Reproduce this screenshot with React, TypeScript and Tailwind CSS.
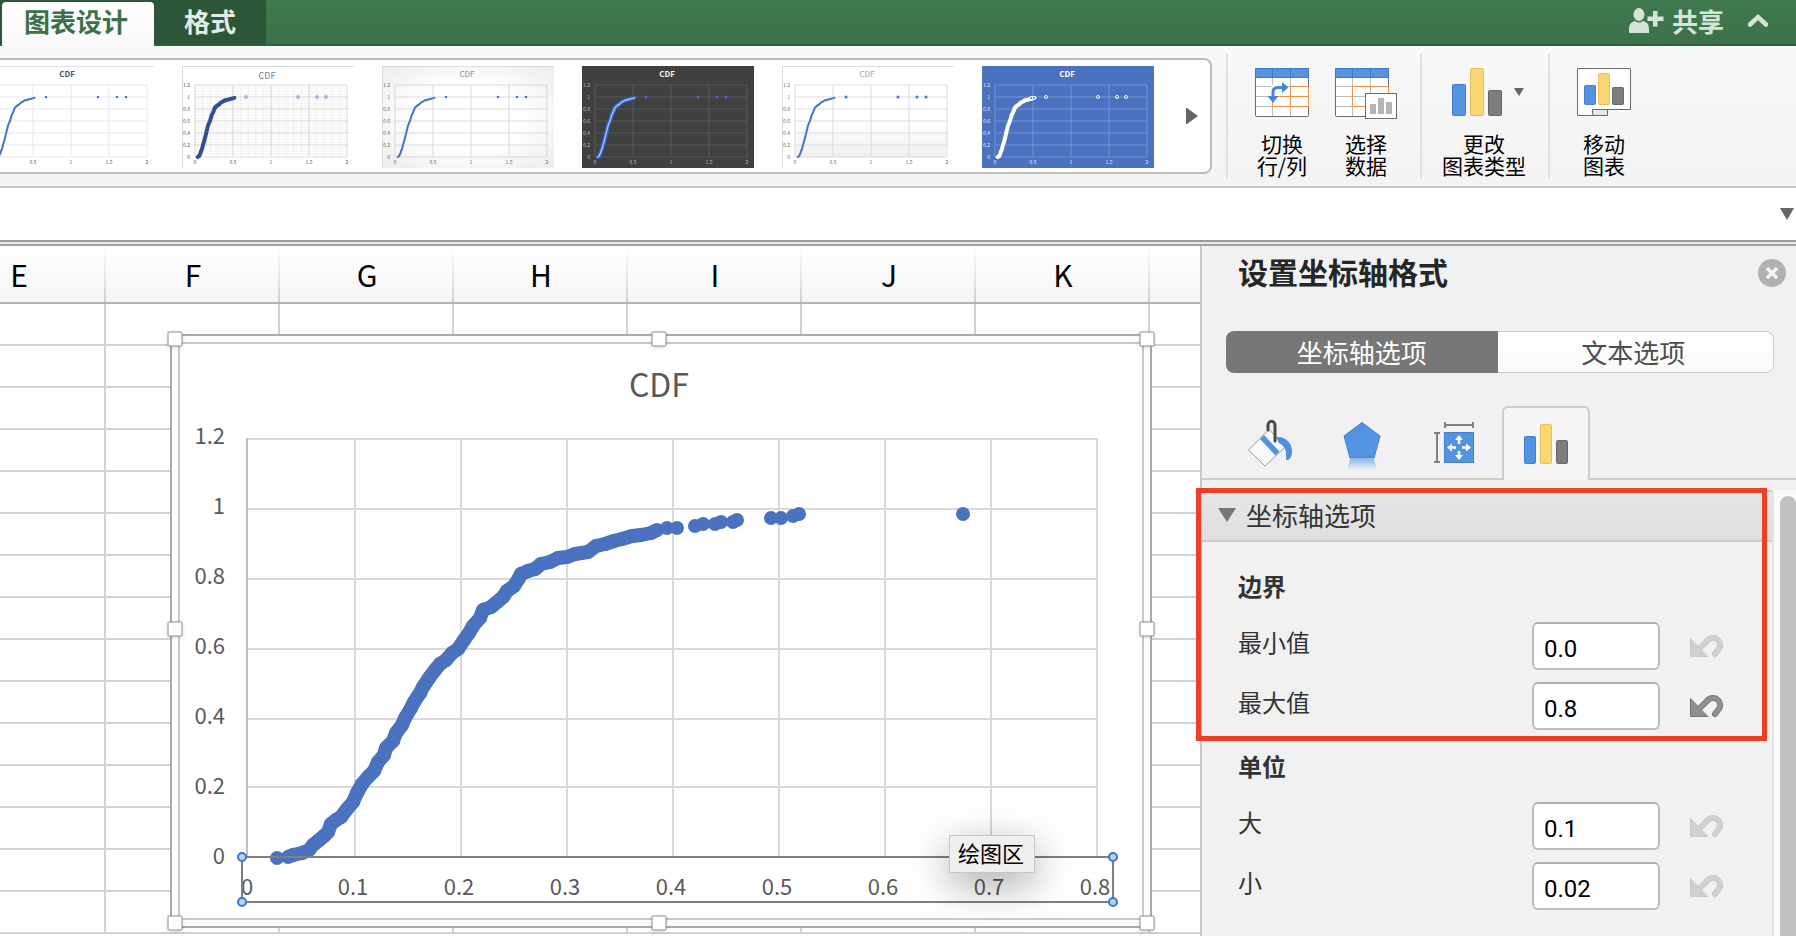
import { useState } from "react";
import clsx from "clsx";

type Point = [number, number];

const curve: Point[] = [
    [288, 857], [293, 855], [302, 853], [309, 850], [313, 845], [318, 841], [324, 836], [328, 832], [331, 824], [336, 820],
    [341, 817], [347, 809], [353, 802], [357, 793], [362, 784], [368, 777], [374, 771], [378, 762], [384, 755], [386, 748],
    [393, 741], [396, 733], [402, 725], [405, 718], [411, 708], [414, 702], [420, 693], [423, 687], [429, 678], [435, 670],
    [440, 664], [446, 660], [452, 653], [458, 649], [464, 640], [469, 633], [473, 626], [480, 618], [483, 610], [491, 607],
    [497, 602], [503, 597], [507, 591], [514, 586], [519, 578], [521, 574], [528, 571], [535, 569], [541, 564], [550, 562],
    [558, 558], [567, 557], [575, 554], [588, 552], [596, 546], [605, 544], [614, 541], [622, 539], [632, 536], [641, 535],
    [651, 533], [657, 530], [667, 528], [677, 528],
];

const scattered: Point[] = [
    [277, 858], [695, 526], [703, 524], [715, 524], [721, 522], [733, 522], [737, 520],
    [771, 518], [781, 518], [793, 516], [799, 514], [963, 514],
];

const xTicks = ["0", "0.1", "0.2", "0.3", "0.4", "0.5", "0.6", "0.7", "0.8"];
const yTicks = ["0", "0.2", "0.4", "0.6", "0.8", "1", "1.2"];
const columns = ["E", "F", "G", "H", "I", "J", "K", ""];
const rows = Array.from({ length: 15 }, (_, i) => i);

// chart coordinates -> thumbnail coordinates (thumbnail x axis runs 0..2)
const toThumb = ([x, y]: Point): Point => [13 + ((x - 249) / 1060) * 76, 91 - ((857 - y) / 348) * 60];
const thumbLine = [...curve, [799, 514] as Point].map((p) => toThumb(p).join(",")).join(" ");
const thumbDots: Point[] = [[64, 31], [116, 31], [135, 31], [144, 31]];

type Theme = {
    id: string;
    bg: string;
    grid: string;
    title: string;
    label: string;
    line: string;
    width: number;
    dot: string;
    dotSize: number;
    bold?: boolean;
    minor?: boolean;
    glow?: boolean;
    hollow?: boolean;
    clipped?: boolean;
    edge?: string;
};

const themes: Theme[] = [
    { id: "s1", bg: "#ffffff", grid: "#e6e8ee", title: "#44546a", label: "#555555", line: "#4472c4", width: 2, dot: "#4472c4", dotSize: 1.3, bold: true, clipped: true, edge: "#dde1ee" },
    { id: "s2", bg: "#ffffff", grid: "#dcdcdc", title: "#7d7d7d", label: "#555555", line: "#2f528f", width: 4, dot: "#a9b9dc", dotSize: 2, minor: true, edge: "#d9d9d9" },
    { id: "s3", bg: "url(#fade)", grid: "#dadada", title: "#8c8c8c", label: "#666666", line: "#4472c4", width: 2, dot: "#4472c4", dotSize: 1.3, edge: "#dcdcdc" },
    { id: "s4", bg: "#404040", grid: "#575757", title: "#f2f2f2", label: "#bfbfbf", line: "#a9c2f0", width: 1.4, dot: "#3b6fdc", dotSize: 1.4, bold: true, glow: true },
    { id: "s5", bg: "url(#floor)", grid: "#dcdcdc", title: "#a0a0a0", label: "#666666", line: "#4472c4", width: 2, dot: "#4472c4", dotSize: 1.5, edge: "#dcdcdc" },
    { id: "s6", bg: "#4a72bf", grid: "#7392ce", title: "#ffffff", label: "#e4ebf7", line: "#ffffff", width: 4, dot: "#ffffff", dotSize: 1.5, bold: true, hollow: true },
];

const Thumb = ({ theme }: { theme: Theme }) => (
    <svg width="172" height="102" viewBox="0 0 172 102" className="block">
        <defs>
            <radialGradient id="fade" r="0.65">
                <stop offset="0.5" stopColor="#ffffff" />
                <stop offset="1" stopColor="#eeeeee" />
            </radialGradient>
            <linearGradient id="floor" x2="0" y2="1">
                <stop offset="0.5" stopColor="#ffffff" />
                <stop offset="1" stopColor="#f0f0f0" />
            </linearGradient>
        </defs>
        <rect width="172" height="102" fill={theme.id === "s5" ? "#ffffff" : theme.bg} />
        {theme.id === "s5" && <rect x="13" y="19" width="152" height="72" fill={theme.bg} />}
        {theme.edge && <path d="M0.5 102V0.5H172" fill="none" stroke={theme.edge} />}
        {theme.minor && (
            <g stroke="#f0f0f0">
                {Array.from({ length: 20 }, (_, i) => <path key={i} d={`M${13 + i * 7.6} 19V91`} />)}
                {Array.from({ length: 24 }, (_, i) => <path key={i} d={`M13 ${19 + i * 3}H165`} />)}
            </g>
        )}
        <g stroke={theme.grid}>
            {[13, 51, 89, 127, 165].map((x) => <path key={x} d={`M${x} 19V91`} />)}
            {[19, 31, 43, 55, 67, 79, 91].map((y) => <path key={y} d={`M13 ${y}H165`} />)}
        </g>
        <text x="85" y={theme.minor ? 13 : 11} textAnchor="middle" fontSize={theme.minor ? 9 : 8} fontWeight={theme.bold ? 700 : 400} fill={theme.title}>CDF</text>
        <g fontSize="5" fill={theme.label}>
            {!theme.clipped && yTicks.map((t, i) => <text key={t} x="8" y={93 - i * 12} textAnchor="end">{t}</text>)}
            {["0", "0.5", "1", "1.5", "2"].map((t, i) => (
                theme.clipped && i === 0 ? null : <text key={t} x={13 + i * 38} y="98" textAnchor="middle">{t}</text>
            ))}
        </g>
        <g fill="none" strokeLinecap="round" strokeLinejoin="round">
            {theme.glow && <polyline points={thumbLine} stroke="#2f66de" strokeWidth="4" />}
            <polyline points={thumbLine} stroke={theme.line} strokeWidth={theme.width} />
        </g>
        {(theme.hollow ? [[49, 32] as Point, [52, 32] as Point] : []).concat(thumbDots).map(([x, y]) => (
            <circle
                key={x}
                cx={x}
                cy={y}
                r={theme.dotSize}
                fill={theme.hollow ? "#4a72bf" : theme.dot}
                stroke={theme.hollow ? "#ffffff" : "none"}
            />
        ))}
    </svg>
);

const Bars = ({ className }: { className?: string }) => (
    <svg viewBox="0 0 50 48" className={className}>
        <rect x="0.5" y="16.5" width="13" height="31" rx="1" fill="#5592e2" stroke="#437fce" />
        <rect x="18.5" y="0.5" width="13" height="47" rx="1" fill="#f9d671" stroke="#e5c056" />
        <rect x="36.5" y="22.5" width="13" height="25" rx="1" fill="#7d7d7d" stroke="#666666" />
    </svg>
);

const Sheet = () => (
    <>
        <rect x="0.5" y="0.5" width="53" height="48" rx="1" fill="#ffffff" stroke="#6a6a6a" />
        <path d="M1 18.5H53M1 28.5H53M1 38.5H53M17.5 10V48M35.5 10V48" stroke="#bdbdbd" />
        <rect x="0.5" y="0.5" width="53" height="9" fill="#5592e2" stroke="#3f7ac9" />
        <path d="M17.5 1V9M35.5 1V9" stroke="#3f7ac9" />
    </>
);

const SwitchIcon = () => (
    <svg width="54" height="50" viewBox="0 0 54 50">
        <Sheet />
        <path d="M35.5 18.5H53.5V38.5H17.5V28.5H53.5M35.5 18.5V38.5" fill="none" stroke="#f0914a" />
        <path d="M18 34V25Q18 19.500 23 19.500H32" fill="none" stroke="#ffffff" strokeWidth="8" />
        <path d="M18 29V24Q18 19.5 23 19.5H28" fill="none" stroke="#4485db" strokeWidth="3" />
        <path d="M27 14L33.5 19.5L27 25ZM12.5 28H23.5L18 35Z" fill="#4485db" />
    </svg>
);

const SelectIcon = () => (
    <svg width="62" height="51" viewBox="0 0 62 51">
        <Sheet />
        <path d="M53.5 26V18.5H17.5V38.5H31" fill="none" stroke="#f0914a" />
        <rect x="30.5" y="25.5" width="31" height="25" fill="#ffffff" stroke="#6a6a6a" />
        <path d="M35 36H41V46H35ZM43 30H49V46H43ZM51 34H57V46H51Z" fill="#b5b5b5" />
    </svg>
);

const MoveIcon = () => (
    <svg width="54" height="49" viewBox="0 0 54 49">
        <path d="M0.5 0.5H53.5V41.5H30.5V47.5H0.5Z" fill="#ffffff" stroke="#6a6a6a" />
        <path d="M15.5 41.5H30.5V47.5H17Q15.5 47.5 15.5 45Z" fill="#e8e8e8" stroke="#6a6a6a" />
        <rect x="7.5" y="17.5" width="11" height="19" rx="1" fill="#5592e2" stroke="#437fce" />
        <rect x="21.5" y="5.5" width="11" height="31" rx="1" fill="#f9d671" stroke="#e5c056" />
        <rect x="35.5" y="19.5" width="11" height="17" rx="1" fill="#7d7d7d" stroke="#666666" />
    </svg>
);

const RibbonButton = ({ icon, label, className }: { icon: React.ReactNode; label: string; className?: string }) => (
    <button className={clsx("flex flex-col items-center", className)}>
        <span className="flex h-16 items-start">{icon}</span>
        <span className="text-[21px] leading-[22px] whitespace-pre text-black">{label}</span>
    </button>
);

const Undo = ({ active }: { active?: boolean }) => (
    <svg width="34" height="24" viewBox="0 0 34 24" className={active ? "text-[#8f8f8f]" : "text-[#d0d0d0]"}>
        <g stroke={active ? "#737373" : "#c8c8c8"} fill="none" strokeLinecap="round">
            <path d="M0.5 5V22.5H17.5Z" fill="currentColor" />
            <path d="M10 14L16 8C20 3 25 3 28 6C31 9 31 13 28 16L25 20" strokeWidth="6" />
        </g>
        <path d="M8 16L16 8C20 3 25 3 28 6C31 9 31 13 28 16L25 20" fill="none" stroke="currentColor" strokeWidth="4.5" strokeLinecap="round" />
    </svg>
);

const Field = ({ id, label, value, active }: { id: string; label: string; value: string; active?: boolean }) => {
    const [text, setText] = useState(value);
    return (
        <div className="flex h-12 items-center">
            <label htmlFor={id} className="flex-1 pb-2">{label}</label>
            <input
                id={id}
                value={text}
                onChange={(e) => setText(e.target.value)}
                className="h-12 w-32 rounded-md border-2 border-[#bdbdbd] border-t-[#b0b0b0] bg-white pt-[6px] pl-[10px] font-['Roboto',sans-serif] text-2xl text-black outline-none"
            />
            <button aria-label="撤消" className="mr-12 ml-[30px]">
                <Undo active={active} />
            </button>
        </div>
    );
};

const Handle = ({ x, y }: { x: number; y: number }) => (
    <rect x={x - 7} y={y - 7} width="14" height="14" rx="1" fill="#ffffff" stroke="#8f8f8f" className="drop-shadow-sm" />
);

const Chart = () => (
    <svg width="1000" height="616" viewBox="160 320 1000 616" className="absolute top-[74px] left-40">
        <rect x="171" y="335" width="980" height="592" fill="#ffffff" stroke="#ababab" strokeWidth="2" />
        <rect x="179" y="343" width="964" height="576" fill="#ffffff" stroke="#c9c9c9" strokeWidth="2" />
        <text x="659" y="397" textAnchor="middle" fontSize="32" fill="#595959">CDF</text>
        <g stroke="#d9d9d9" strokeWidth="2">
            {[355, 461, 567, 673, 779, 885, 991, 1097].map((x) => <path key={x} d={`M${x} 439V857`} />)}
            {[439, 509, 579, 649, 719, 787].map((y) => <path key={y} d={`M247 ${y}H1098`} />)}
            <path d="M247 438V857" stroke="#bfbfbf" />
        </g>
        <g fontSize="22" fill="#595959">
            {yTicks.map((t, i) => <text key={t} x="225" y={864 - i * 70} textAnchor="end">{t}</text>)}
            {xTicks.map((t, i) => <text key={t} x={247 + i * 106} y="895" textAnchor="middle">{t}</text>)}
        </g>
        <polyline points={curve.slice(0, -2).map((p) => p.join(",")).join(" ")} fill="none" stroke="#4a72bf" strokeWidth="14" strokeLinejoin="round" />
        <g fill="#4a72bf">
            {[...curve, ...scattered].map(([x, y]) => <circle key={`${x}-${y}`} cx={x} cy={y} r="7" />)}
        </g>
        <rect x="242" y="857" width="871" height="45" fill="none" stroke="#7f7f7f" strokeWidth="2" />
        <g fill="#b5d3f3" stroke="#2f7bd6" strokeWidth="2">
            {[242, 1113].map((x) => [857, 902].map((y) => <circle key={`${x}-${y}`} cx={x} cy={y} r="4" />))}
        </g>
        {[175, 659, 1147].map((x) => [339, 923].map((y) => <Handle key={`${x}-${y}`} x={x} y={y} />))}
        <Handle x={175} y={629} />
        <Handle x={1147} y={629} />
    </svg>
);

const TitleBar = () => (
    <header className="flex h-[46px] shrink-0 border-b-2 border-[#31603f] bg-linear-to-b from-[#40794f] to-[#3b7149] text-[26px] font-bold">
        <div className="flex bg-[#2c5638] pt-[2px] pl-[2px]">
            <button className="-mb-[2px] w-38 rounded-t-sm bg-linear-to-b from-white to-[#f8f8f8] pr-1 pb-[6px] leading-9 text-[#3a7149]">图表设计</button>
            <button className="w-28 pb-1 leading-9 text-[#e3ebe4]">格式</button>
        </div>
        <div className="ml-auto flex items-center pr-7 pb-1 text-[#d5e3d8]">
            <button className="flex items-center gap-2">
                <svg width="35" height="25" viewBox="0 0 35 25" fill="currentColor">
                    <ellipse cx="10" cy="6.5" rx="5.5" ry="6.5" />
                    <path d="M0 25V21Q0 14 6 13Q10 16 14 13Q20 14 20 21V25Z" />
                    <path d="M24 3H28.5V8.5H34.5V13H28.5V18.5H24V13H18.5V8.5H24Z" />
                </svg>
                共享
            </button>
            <button aria-label="折叠功能区" className="ml-6">
                <svg width="20" height="14" viewBox="0 0 20 14" fill="none" stroke="currentColor" strokeWidth="4.5">
                    <path d="M2 11.5L10 4L18 11.5" strokeLinecap="round" />
                </svg>
            </button>
        </div>
    </header>
);

const Ribbon = () => (
    <div className="flex h-[142px] shrink-0 border-b-2 border-[#c8c8c8] bg-linear-to-b from-[#f8f8f8] to-[#f3f3f3]">
        <div className="mt-3 flex h-[116px] min-w-0 flex-1 items-center justify-end overflow-hidden rounded-r-lg border-2 border-l-0 border-[#bdbdbd] bg-white">
            <div className="flex shrink-0 gap-7 pt-[2px]">
                {themes.map((theme) => (
                    <button key={theme.id} aria-label="CDF">
                        <Thumb theme={theme} />
                    </button>
                ))}
            </div>
            <button aria-label="更多" className="mr-3 ml-8">
                <svg width="12" height="16" viewBox="0 0 12 16"><path d="M0 0H1L12 8L1 16H0Z" fill="#666666" /></svg>
            </button>
        </div>
        <div className="flex w-[584px] shrink-0 pt-2 pl-[14px]">
            <div className="flex h-31 border-l-2 border-[#e0e0e0] pt-[14px]">
                <RibbonButton icon={<SwitchIcon />} label={"切换\n行/列"} className="ml-[27px] w-[54px]" />
                <RibbonButton icon={<SelectIcon />} label={"选择\n数据"} className="ml-[26px] w-[62px]" />
            </div>
            <div className="ml-[23px] flex h-31 border-l-2 border-[#e0e0e0] pt-[14px]">
                <RibbonButton
                    icon={
                        <span className="flex pl-2">
                            <Bars className="h-12 w-[50px]" />
                            <svg width="10" height="8" viewBox="0 0 10 8" className="mt-5 ml-3"><path d="M0 0H10L5 8Z" fill="#666666" /></svg>
                        </span>
                    }
                    label={"更改\n图表类型"}
                    className="ml-5 w-[84px]"
                />
            </div>
            <div className="ml-[22px] flex h-31 border-l-2 border-[#e0e0e0] pt-[14px]">
                <RibbonButton icon={<MoveIcon />} label={"移动\n图表"} className="ml-[27px] w-[54px]" />
            </div>
        </div>
    </div>
);

const FormulaBar = () => (
    <>
        <div className="flex h-[54px] shrink-0 items-center justify-end border-b-2 border-[#9c9c9c] bg-[#fdfdfd]">
            <button aria-label="展开编辑栏" className="mr-[2px]">
                <svg width="14" height="12" viewBox="0 0 14 12"><path d="M0 0H14L7 12Z" fill="#666666" /></svg>
            </button>
        </div>
        <div className="h-1 shrink-0 border-b-2 border-[#a3a3a3] bg-[#e8e8e8]" />
    </>
);

const Worksheet = () => (
    <main className="relative min-w-0 flex-1 overflow-hidden bg-white">
        <table className="-ml-17 w-[1392px] table-fixed border-separate border-spacing-0">
            <thead>
                <tr className="h-[58px]">
                    {columns.map((name) => (
                        <th key={name} className="relative border-b-2 border-[#b3b3b3] bg-linear-to-b from-white to-[#f5f5f5] p-0 text-[30px] leading-9 font-normal text-black">
                            {name}
                            <span className="absolute inset-y-0 right-0 w-[2px] bg-linear-to-b from-white to-[#d0d0d0]" />
                        </th>
                    ))}
                </tr>
            </thead>
            <tbody>
                {rows.map((row) => (
                    <tr key={row} className="h-[42px]">
                        {columns.map((name) => <td key={name} className="border-r-2 border-b-2 border-[#d2d2d2] p-0" />)}
                    </tr>
                ))}
            </tbody>
        </table>
        <Chart />
        <div role="tooltip" className="absolute top-[589px] left-[949px] border border-[#c6c6c6] bg-[#efefef] px-2 pr-[10px] pb-1 text-[22px] leading-8 text-black shadow-[0_12px_40px_rgba(0,0,0,0.35)]">
            绘图区
        </div>
    </main>
);

const FormatPane = () => (
    <aside className="relative flex w-[596px] shrink-0 flex-col border-l-2 border-[#c9c9c9] bg-[#f1f1f1] text-2xl text-[#333333]">
        <div className="flex h-[54px] items-center justify-between pr-[10px] pl-9">
            <h2 className="pb-1 text-[30px] leading-9 font-bold text-[#262626]">设置坐标轴格式</h2>
            <button aria-label="关闭">
                <svg width="28" height="28" viewBox="0 0 28 28">
                    <circle cx="14" cy="14" r="14" fill="#b1b1b1" />
                    <path d="M9 9L19 19M19 9L9 19" stroke="#f5f5f5" strokeWidth="3.5" />
                </svg>
            </button>
        </div>
        <div className="mt-[31px] mr-[22px] ml-6 flex h-[42px] text-[26px] leading-10">
            <button className="flex-1 rounded-l-lg bg-[#777777] text-white">坐标轴选项</button>
            <button className="flex-1 rounded-r-lg border border-l-0 border-[#cdcdcd] bg-linear-to-b from-white to-[#fafafa] pr-1 leading-9 text-[#4d4d4d]">文本选项</button>
        </div>
        <div className="mt-[33px] flex h-[74px] shrink-0 border-b-2 border-[#cccccc] pl-6">
            <button aria-label="填充与线条" className="flex w-22 justify-center pt-3">
                <svg width="48" height="50" viewBox="0 0 48 50">
                    <path d="M2.5 32L23 11.5L39.5 28.5L19 48Z" fill="#fafafa" stroke="#999999" />
                    <path d="M14 21L18 17L33.500 33.500L29.500 37.500Z" fill="#5592e2" />
                    <path d="M30 19C40 18 47 26 46 35C45 40 43 43 40 41.5C41 33 39 28 33 25Z" fill="#4f8ddd" />
                    <path d="M22 12V8C22 1.5 29 1.5 29 8V23" fill="none" stroke="#4a4a4a" strokeWidth="3" strokeLinecap="round" />
                </svg>
            </button>
            <button aria-label="效果" className="mx-1 flex w-22 justify-center pt-4">
                <svg width="38" height="50" viewBox="0 0 38 50">
                    <defs>
                        <linearGradient id="mirror" x2="0" y2="1">
                            <stop offset="0" stopColor="#8dbaee" />
                            <stop offset="1" stopColor="#f1f1f1" />
                        </linearGradient>
                    </defs>
                    <path d="M19 0.5L37 14L31 36H7L1 14Z" fill="#5592e2" stroke="#437fce" />
                    <path d="M7 37H31L34 48H4Z" fill="url(#mirror)" />
                </svg>
            </button>
            <button aria-label="大小与属性" className="mr-1 flex w-22 justify-center pt-4">
                <svg width="40" height="42" viewBox="0 0 40 42">
                    <path d="M11 3H39M11 0V6M39 0V6M3 11V40M0 11H6M0 40H6" fill="none" stroke="#808080" strokeWidth="2" />
                    <rect x="10.5" y="10.5" width="29" height="30" fill="#5592e2" stroke="#437fce" />
                    <path d="M25 16V22M25 29V35M16 25.5H22M28 25.5H34" stroke="#ffffff" strokeWidth="2.5" />
                    <path d="M25 13L29 18H21ZM25 38L29 33H21ZM13 25.5L18 21.5V29.5ZM37 25.5L32 21.5V29.5Z" fill="#ffffff" />
                </svg>
            </button>
            <button aria-label="坐标轴选项" className="-mb-[2px] flex w-22 justify-center rounded-t-md border-2 border-b-0 border-[#cccccc] bg-[#f5f5f5] pt-4">
                <svg width="44" height="40" viewBox="0 0 44 40">
                    <rect x="0.5" y="12.5" width="11" height="27" rx="1" fill="#5592e2" stroke="#437fce" />
                    <rect x="16.5" y="0.5" width="11" height="39" rx="1" fill="#f9d671" stroke="#e5c056" />
                    <rect x="32.5" y="16.5" width="11" height="23" rx="1" fill="#7d7d7d" stroke="#666666" />
                </svg>
            </button>
        </div>
        <div className="flex min-h-0 flex-1 pt-[10px]">
            <section className="flex-1">
                <button className="flex h-[52px] w-full items-center gap-[10px] border-y-2 border-[#cccccc] bg-linear-to-b from-[#e6e6e6] to-[#dfdfdf] pb-[2px] pl-4 text-[26px] leading-9">
                    <svg width="18" height="14" viewBox="0 0 18 14"><path d="M0 0H18L9 14Z" fill="#777777" /></svg>
                    坐标轴选项
                </button>
                <div className="flex flex-col gap-3 pt-5 pl-9">
                    <h3 className="h-12 leading-12 font-bold">边界</h3>
                    <Field id="min" label="最小值" value="0.0" />
                    <Field id="max" label="最大值" value="0.8" active />
                    <h3 className="h-12 leading-12 font-bold">单位</h3>
                    <Field id="major" label="大" value="0.1" />
                    <Field id="minor" label="小" value="0.02" />
                </div>
            </section>
            <div className="w-6 border-l-2 border-[#e4e4e4] bg-[#fafafa] pt-[6px] pl-[6px]">
                <div className="h-full rounded-t-lg bg-[#c1c1c1]" />
            </div>
        </div>
        <div className="pointer-events-none absolute top-[242px] right-[29px] -left-[6px] h-[253px] border-5 border-[#ee3f26]" />
    </aside>
);

const App = () => {
    return (
        <div className="flex h-screen flex-col overflow-hidden bg-white font-['Noto_Sans_CJK_SC',sans-serif]">
            <TitleBar />
            <Ribbon />
            <FormulaBar />
            <div className="flex min-h-0 flex-1">
                <Worksheet />
                <FormatPane />
            </div>
        </div>
    );
};

export default App;
